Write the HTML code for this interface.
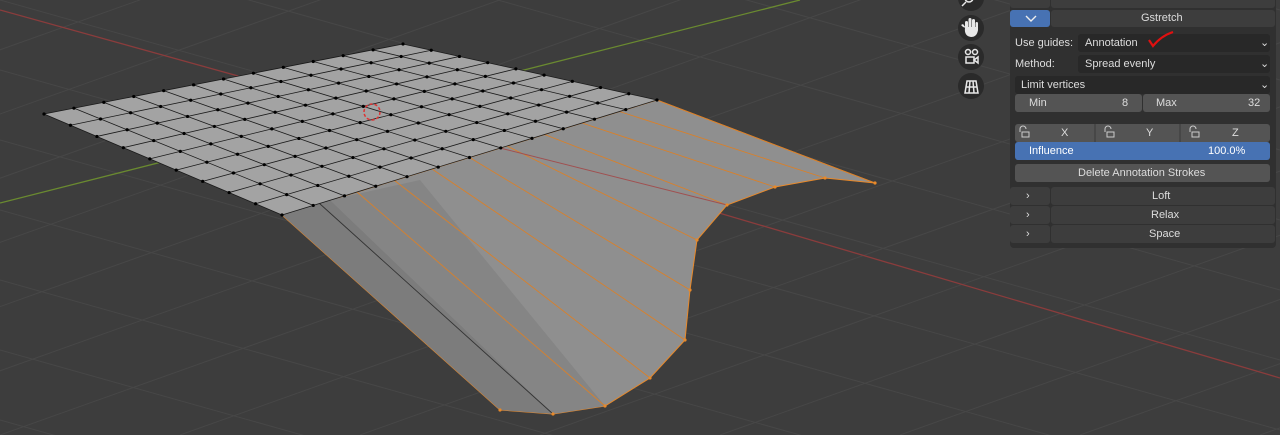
<!DOCTYPE html>
<html><head><meta charset="utf-8"><style>
body{margin:0;width:1280px;height:435px;overflow:hidden;background:#3d3d3d;font-family:"Liberation Sans",sans-serif;font-size:11px;color:#ddd;position:relative}
svg{position:absolute;left:0;top:0}
.p{position:absolute;left:1010px;top:0;width:266px;height:248px;background:#303030;border-radius:0 0 4px 4px}
.b{position:absolute;box-sizing:border-box;border-radius:3px}
.h{background:#3d3d3d}
.dd{background:#282828}
.t{position:absolute;line-height:18px}
.ic{position:absolute;left:958px;width:26px;height:26px;border-radius:13px;background:#2a2a2a}
</style></head><body>
<svg width="1280" height="435" id="s"></svg>
<div class="ic" style="top:-15px"></div><div class="ic" style="top:15px"></div><div class="ic" style="top:44px"></div><div class="ic" style="top:73px"></div>
<svg width="1280" height="435" style="pointer-events:none">
 <g fill="#e8e8e8" stroke="none">
  <rect x="965" y="21" width="3" height="9" rx="1.5"/><rect x="968.5" y="18" width="3" height="12" rx="1.5"/><rect x="972" y="19" width="3" height="11" rx="1.5"/><rect x="975.5" y="22" width="2.5" height="9" rx="1.2"/>
  <path d="M965 28 Q964 36 971 37 Q977 37 978 30 L978 27 L965 27Z"/>
  <path d="M963 27 L961 25 L963 24 L966 28Z"/>
 </g>
 <g fill="none" stroke="#e8e8e8" stroke-width="1.5">
  <circle cx="968" cy="52" r="2.5"/><circle cx="975" cy="52" r="2.5"/><rect x="966" y="57" width="8" height="6"/><path d="M974 60 L978 57 L978 63Z"/>
  <path d="M965 93 L967 81 L976 81 L978 93Z M966 87 H977 M970 81 L969 93 M973 81 L974 93"/>
  <circle cx="969" cy="-2" r="4"/><path d="M966 2 L962 6"/>
 </g>
</svg>
<div class="p">
 <div class="b h" style="left:0;top:-8px;width:40px;height:16px"></div>
 <div class="b h" style="left:41px;top:-8px;width:224px;height:16px"></div>
 <div class="t" style="left:140px;top:-13px">Flatten</div>
 <div class="b" style="left:0;top:10px;width:40px;height:17px;background:#4772b3"></div>
 <svg width="12" height="8" style="left:15px;top:15px"><path d="M1 1 L6 6 L11 1" stroke="#eee" stroke-width="1.4" fill="none"/></svg>
 <div class="b h" style="left:41px;top:10px;width:224px;height:17px"></div>
 <div class="t" style="left:131px;top:9px">Gstretch</div>
 <div class="t" style="left:5px;top:34px">Use guides:</div>
 <div class="b dd" style="left:68px;top:34px;width:192px;height:18px"></div>
 <div class="t" style="left:75px;top:34px">Annotation</div><div class="t" style="left:250px;top:34px">⌄</div>
 <svg width="40" height="20" style="left:135px;top:30px"><path d="M4 10 L8 16 Q16 6 28 2" stroke="#e01010" stroke-width="2.2" fill="none"/></svg>
 <div class="t" style="left:5px;top:55px">Method:</div>
 <div class="b dd" style="left:68px;top:55px;width:192px;height:18px"></div>
 <div class="t" style="left:75px;top:55px">Spread evenly</div><div class="t" style="left:250px;top:55px">⌄</div>
 <div class="b dd" style="left:5px;top:76px;width:255px;height:18px"></div>
 <div class="t" style="left:11px;top:76px">Limit vertices</div><div class="t" style="left:250px;top:76px">⌄</div>
 <div class="b h" style="left:5px;top:94px;width:127px;height:18px;background:#545454"></div>
 <div class="b h" style="left:133px;top:94px;width:127px;height:18px;background:#545454"></div>
 <div class="t" style="left:19px;top:94px">Min</div><div class="t" style="left:112px;top:94px">8</div>
 <div class="t" style="left:146px;top:94px">Max</div><div class="t" style="left:238px;top:94px">32</div>
 <div class="b" style="left:5px;top:124px;width:255px;height:18px;background:#545454"></div>
 <svg width="255" height="18" style="left:5px;top:124px"><g fill="none" stroke="#ccc" stroke-width="1"><path d="M5 8 V5 A3 3 0 0 1 11 5"/><rect x="7" y="8" width="7" height="5"/><path d="M90 8 V5 A3 3 0 0 1 96 5"/><rect x="92" y="8" width="7" height="5"/><path d="M175 8 V5 A3 3 0 0 1 181 5"/><rect x="177" y="8" width="7" height="5"/></g><line x1="80" y1="0" x2="80" y2="18" stroke="#3a3a3a"/><line x1="165" y1="0" x2="165" y2="18" stroke="#3a3a3a"/></svg>
 <div class="t" style="left:51px;top:124px">X</div><div class="t" style="left:136px;top:124px">Y</div><div class="t" style="left:222px;top:124px">Z</div>
 <div class="b" style="left:5px;top:142px;width:255px;height:18px;background:#4772b3"></div>
 <div class="t" style="left:19px;top:142px;color:#fff">Influence</div><div class="t" style="left:198px;top:142px;color:#fff">100.0%</div>
 <div class="b" style="left:5px;top:164px;width:255px;height:18px;background:#545454"></div>
 <div class="t" style="left:68px;top:164px">Delete Annotation Strokes</div>
 <div class="b h" style="left:0;top:187px;width:40px;height:18px"></div><div class="b h" style="left:41px;top:187px;width:224px;height:18px"></div>
 <div class="t" style="left:16px;top:187px">›</div><div class="t" style="left:142px;top:187px">Loft</div>
 <div class="b h" style="left:0;top:206px;width:40px;height:18px"></div><div class="b h" style="left:41px;top:206px;width:224px;height:18px"></div>
 <div class="t" style="left:16px;top:206px">›</div><div class="t" style="left:141px;top:206px">Relax</div>
 <div class="b h" style="left:0;top:225px;width:40px;height:18px"></div><div class="b h" style="left:41px;top:225px;width:224px;height:18px"></div>
 <div class="t" style="left:16px;top:225px">›</div><div class="t" style="left:139px;top:225px">Space</div>
</div>
<script>
var s=document.getElementById('s'),h='';
function L(a,b,c,d,col,w){h+='<line x1="'+a+'" y1="'+b+'" x2="'+c+'" y2="'+d+'" stroke="'+col+'" stroke-width="'+(w||1)+'"/>';}
for(var i=-8;i<14;i++){L(0,i*70,1280,i*70+360,'#474747');L(i*180,435,i*180+1500,-100,'#474747');}
L(0,203,800,0,'#6a8a30',1.3);L(0,10,505,150,'#8a3c3c',1.3);L(505,150,1280,378,'#8a3c3c',1.3);
var A=[44,114],B=[403,44],C=[657,100],D=[282,215],NU=12,NV=9;
function P(u,v){var x=(1-u)*(1-v)*A[0]+u*(1-v)*B[0]+u*v*C[0]+(1-u)*v*D[0];var y=(1-u)*(1-v)*A[1]+u*(1-v)*B[1]+u*v*C[1]+(1-u)*v*D[1];return[x,y];}
var bot=[[500,410],[553,414],[605,406],[650,378],[685,340],[690,290],[697,240],[727,205],[775,187],[825,178],[875,183]];
var poly=[D].concat(bot).concat([C]);
h+='<polygon points="'+poly.map(function(p){return p.join(',')}).join(' ')+'" fill="#8f8f8f" stroke="#e8892a" stroke-width="1"/>';
h+='<polygon points="282,215 500,410 553,414 330,200" fill="#7c7c7c"/>';
h+='<polygon points="330,200 553,414 605,406 420,180" fill="#858585"/>';
for(var i=0;i<=10;i++){var t=i/10;var e=[D[0]+(C[0]-D[0])*t,D[1]+(C[1]-D[1])*t];if(i>0)L(e[0],e[1],bot[i][0],bot[i][1],i<2?'#333':'#d9802a',0.9);}
L(500,148,727,205,'#a05050',1);
h+='<polygon points="'+A+' '+B+' '+C+' '+D+'" fill="#a3a3a3"/>';
for(var i=0;i<=NU;i++){var a=P(i/NU,0),b=P(i/NU,1);L(a[0],a[1],b[0],b[1],'#1a1a1a',0.8);}
for(var j=0;j<=NV;j++){var a=P(0,j/NV),b=P(1,j/NV);L(a[0],a[1],b[0],b[1],'#1a1a1a',0.8);}
for(var i=0;i<=NU;i++)for(var j=0;j<=NV;j++){var p=P(i/NU,j/NV);h+='<circle cx="'+p[0]+'" cy="'+p[1]+'" r="1.6" fill="#000"/>';}
for(var i=0;i<11;i++)h+='<circle cx="'+bot[i][0]+'" cy="'+bot[i][1]+'" r="1.6" fill="#e8892a"/>';
h+='<circle cx="372" cy="112" r="8" fill="none" stroke="#d33" stroke-width="1.5" stroke-dasharray="3,2"/>';
s.innerHTML=h;
</script>
</body></html>
